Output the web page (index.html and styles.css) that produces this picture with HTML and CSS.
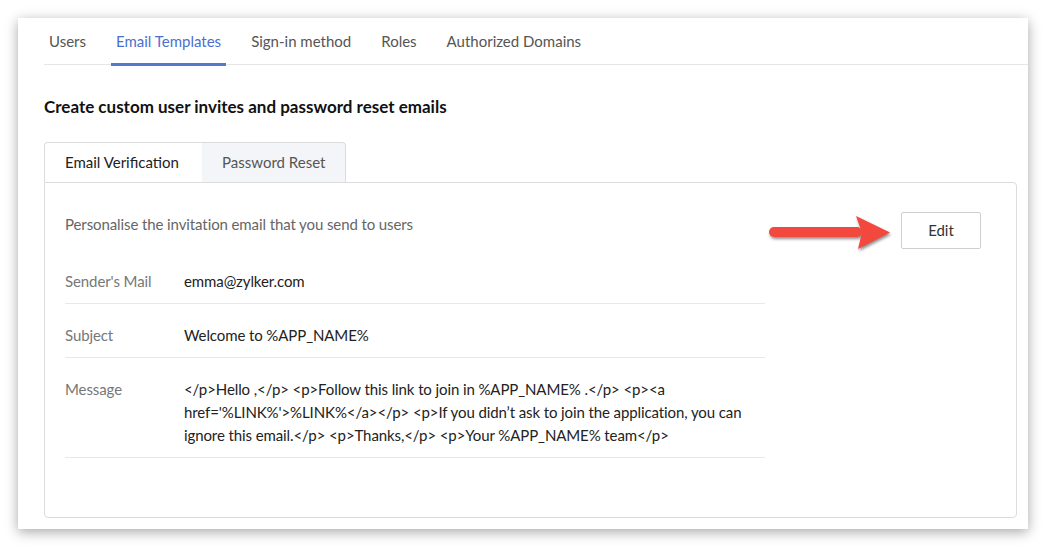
FILE: index.html
```html
<!DOCTYPE html>
<html lang="en">
<head>
  <meta charset="UTF-8">
  <title>Email Templates</title>
  <link rel="stylesheet" href="styles.css">
</head>
<body>
<div class="card">
  <div class="nav">
    <span class="nav-item">Users</span>
    <span class="nav-item active">Email Templates</span>
    <span class="nav-item">Sign-in method</span>
    <span class="nav-item">Roles</span>
    <span class="nav-item">Authorized Domains</span>
  </div>

  <div class="content">
    <h1 class="title">Create custom user invites and password reset emails</h1>

    <div class="tabs">
      <span class="tab active">Email Verification</span>
      <span class="tab">Password Reset</span>
    </div>

    <div class="panel">
      <div class="panel-head">
        <p class="desc">Personalise the invitation email that you send to users</p>
        <span class="btn">Edit</span>
        <svg class="arrow" width="128" height="40" viewBox="0 0 128 40">
          <rect x="2" y="14" width="93" height="10" rx="5" fill="#f2483d"/>
          <polygon points="89,3 123,19.5 91,36 95,19.5" fill="#f2483d"/>
        </svg>
      </div>

      <div class="rows">
        <div class="row">
          <span class="label">Sender's Mail</span>
          <span class="value">emma@zylker.com</span>
        </div>
        <div class="row">
          <span class="label">Subject</span>
          <span class="value">Welcome to %APP_NAME%</span>
        </div>
        <div class="row">
          <span class="label">Message</span>
          <span class="value">&lt;/p&gt;Hello ,&lt;/p&gt; &lt;p&gt;Follow this link to join in %APP_NAME% .&lt;/p&gt; &lt;p&gt;&lt;a href='%LINK%'&gt;%LINK%&lt;/a&gt;&lt;/p&gt; &lt;p&gt;If you didn’t ask to join the application, you can ignore this email.&lt;/p&gt; &lt;p&gt;Thanks,&lt;/p&gt; &lt;p&gt;Your %APP_NAME% team&lt;/p&gt;</span>
        </div>
      </div>
    </div>
  </div>
</div>
</body>
</html>
```

FILE: styles.css
```css
* {
	margin: 0;
	padding: 0;
	box-sizing: border-box;
}

body {
	background: #fff;
	font: normal 15px Lato, "Open Sans", sans-serif;
	color: #222;
}

.card {
	width: 1010px;
	height: 511px;
	margin: 18px;
	background: #fff;
	box-shadow: 0 3px 12px rgba(0, 0, 0, 0.35);
}

.nav {
	display: flex;
	gap: 20px;
	height: 47px;
	margin-left: 26px;
	border-bottom: 1px solid #e6e6e6;
}

.nav-item {
	padding: 0 5px;
	line-height: 47px;
	color: #555;
	border-bottom: 3px solid transparent;
	margin-bottom: -2px;
}

.nav-item.active {
	color: #4a6fd1;
	border-bottom-color: #5577cc;
}

.content {
	padding: 0 11px 0 26px;
}

.title {
	margin-top: 30px;
	font-size: 17px;
	font-weight: bold;
	line-height: 24px;
	color: #111;
}

.tabs {
	display: flex;
	margin-top: 23px;
}

.tab {
	height: 40px;
	line-height: 38px;
	padding: 0 20px;
	border: 1px solid #dcdcdc;
	border-bottom: none;
	border-left: none;
	border-radius: 0 4px 0 0;
	color: #555;
	background: #f4f5f9;
}

.tab.active {
	width: 158px;
	background: #fff;
	color: #222;
	border-left: 1px solid #dcdcdc;
	border-right: none;
	border-radius: 4px 0 0 0;
	position: relative;
	z-index: 1;
	margin-bottom: -1px;
}

.panel {
	height: 336px;
	border: 1px solid #dcdcdc;
	border-radius: 0 4px 4px 4px;
	padding: 29px 35px 0 20px;
	letter-spacing: -0.1px;
}

.panel-head {
	display: flex;
	justify-content: space-between;
	align-items: flex-start;
	position: relative;
}

.desc {
	line-height: 24px;
	color: #666;
}

.btn {
	width: 80px;
	height: 37px;
	line-height: 35px;
	text-align: center;
	border: 1px solid #cfcfcf;
	border-radius: 2px;
	color: #333;
	letter-spacing: 0;
}

.arrow {
	position: absolute;
	left: 702px;
	top: 1px;
	filter: drop-shadow(1px 2px 1.5px rgba(0, 0, 0, 0.45));
}

.rows {
	width: 700px;
	margin-top: 1px;
}

.row {
	display: flex;
	padding: 20px 0 10px;
	border-bottom: 1px solid #e8e8e8;
	line-height: 23px;
}

.label {
	flex: 0 0 119px;
	color: #777;
}

.value {
	flex: 1;
	color: #222;
}
```
